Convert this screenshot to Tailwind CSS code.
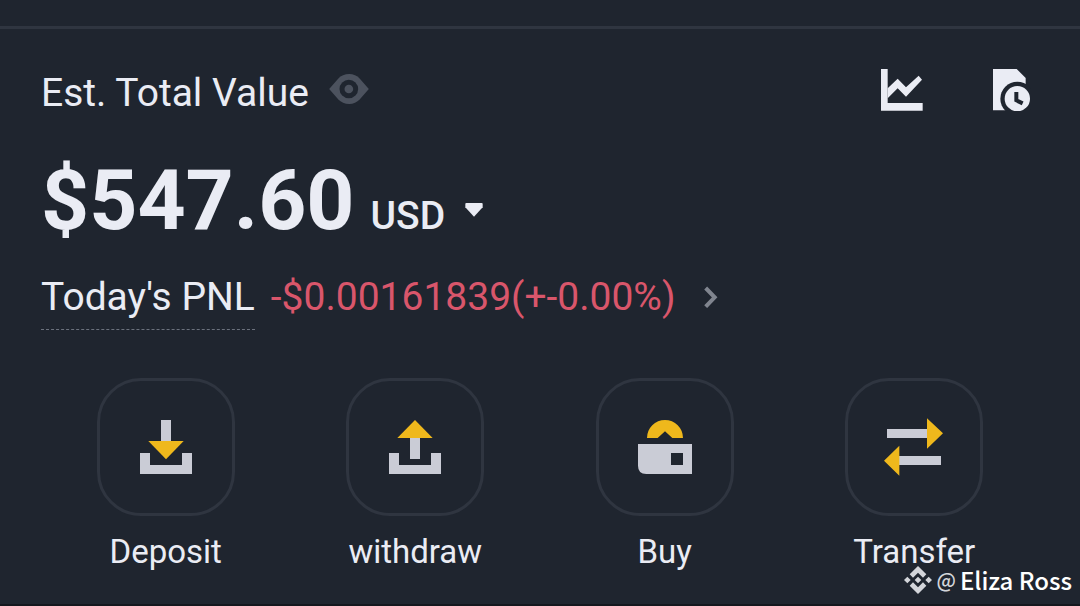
<!DOCTYPE html>
<html lang="en">
<head>
    <meta charset="UTF-8">
    <meta name="viewport" content="width=device-width, initial-scale=1.0">
    <script src="https://cdn.jsdelivr.net/npm/@tailwindcss/browser@4"></script>
    <title>Wallet Overview</title>
</head>
<body class="bg-[#1f252f] text-[#eaecf4] font-[Roboto,sans-serif]">
    <div class="relative min-h-screen border-b-2 border-[#14171e]">

        <!-- Top divider -->
        <div class="h-[26px]"></div>
        <hr class="border-t-[3px] border-[#2f3540]">

        <main class="pl-[41px] pr-[41px]">

            <!-- Title row -->
            <header class="flex items-center justify-between pt-9 pr-2">
                <div class="flex items-center gap-5">
                    <h1 class="text-[39px] leading-[56px]">Est. Total Value</h1>
                    <button type="button" aria-label="Hide balance" class="pb-2">
                        <svg class="w-10 h-[30px]" viewBox="0 0 119 90">
                            <path fill="#4c525e" d="M0 45L27 14Q40 0 60 0Q79 0 92 14L119 45L92 76Q79 90 60 90Q40 90 27 76Z"/>
                            <circle cx="59" cy="45" r="28" fill="#1f252f"/>
                            <circle cx="59" cy="45" r="13" fill="#4c525e"/>
                        </svg>
                    </button>
                </div>
                <div class="flex items-center gap-[70px] pb-1.5">
                    <button type="button" aria-label="Analysis">
                        <svg class="w-[42px] h-[42px]" viewBox="0 0 126 126" fill="#eaecf4">
                            <path d="M0 0H20V102H125V125H0Z"/>
                            <path d="M20 58L50 29L75 55L113 20L123 32L75 83L50 58L20 88Z"/>
                        </svg>
                    </button>
                    <button type="button" aria-label="History">
                        <svg class="w-[38px] h-[42px]" viewBox="0 0 114 126">
                            <path fill="#eaecf4" d="M0 0H71L98 27V124H0Z"/>
                            <circle cx="73" cy="89" r="51" fill="#1f252f"/>
                            <circle cx="73" cy="89" r="38" fill="#eaecf4"/>
                            <path d="M70 69V94L89 103" fill="none" stroke="#1f252f" stroke-width="12"/>
                        </svg>
                    </button>
                </div>
            </header>

            <!-- Balance -->
            <div class="flex items-baseline gap-4 mt-7">
                <p class="text-[84px] leading-[104px] font-bold">$547.60</p>
                <button type="button" class="flex items-center gap-5 text-[39px] leading-[48px] font-medium">
                    USD
                    <svg class="w-[18px] h-[14px] mb-3" viewBox="0 0 54 42" fill="#eaecf4">
                        <path d="M4 0H50Q53 0 53 3V13L27 41L1 13V3Q1 0 4 0Z"/>
                    </svg>
                </button>
            </div>

            <!-- Daily profit and loss -->
            <div class="flex items-start gap-4 mt-4 text-[39px] leading-[56px]">
                <p class="border-b border-dashed border-[#6b717d] pb-1">Today's PNL</p>
                <a href="#" class="flex items-center gap-7">
                    <span class="text-[#d9566b]">-$0.00161839(+-0.00%)</span>
                    <svg class="w-[14px] h-[22px]" viewBox="0 0 42 66" fill="none" stroke="#80858f" stroke-width="12">
                        <path d="M5 6L32 34L5 62"/>
                    </svg>
                </a>
            </div>

            <!-- Actions -->
            <nav class="grid grid-cols-4 mt-12 text-[33px] leading-[40px]">
                <a href="#" class="flex flex-col items-center gap-4">
                    <span class="flex items-center justify-center w-[138px] h-[138px] rounded-[44px] border-3 border-[#2f3540]">
                        <svg class="w-[60px] h-[60px]" viewBox="0 0 180 180">
                            <path fill="#caccd6" d="M75 9H105V72H75ZM12 108H42V144H138V108H168V171H12Z"/>
                            <path fill="#efb81c" d="M37 72H143L90 127Z"/>
                        </svg>
                    </span>
                    Deposit
                </a>
                <a href="#" class="flex flex-col items-center gap-4">
                    <span class="flex items-center justify-center w-[138px] h-[138px] rounded-[44px] border-3 border-[#2f3540]">
                        <svg class="w-[60px] h-[60px]" viewBox="0 0 180 180">
                            <path fill="#caccd6" d="M75 62H105V126H75ZM12 108H42V144H138V108H168V171H12Z"/>
                            <path fill="#efb81c" d="M37 63H143L90 9Z"/>
                        </svg>
                    </span>
                    withdraw
                </a>
                <a href="#" class="flex flex-col items-center gap-4">
                    <span class="flex items-center justify-center w-[138px] h-[138px] rounded-[44px] border-3 border-[#2f3540]">
                        <svg class="w-[60px] h-[60px]" viewBox="0 0 180 180">
                            <path fill="#efb81c" d="M36 63A54 54 0 0 1 144 63H112L90 43L68 63Z"/>
                            <path fill="#caccd6" fill-rule="evenodd" d="M9 81H171V171H34Q9 171 9 146ZM108 108V144H144V108Z"/>
                        </svg>
                    </span>
                    Buy
                </a>
                <a href="#" class="flex flex-col items-center gap-4">
                    <span class="flex items-center justify-center w-[138px] h-[138px] rounded-[44px] border-3 border-[#2f3540]">
                        <svg class="w-[60px] h-[60px]" viewBox="0 0 180 180">
                            <path fill="#caccd6" d="M9 36H131V63H9ZM44 117H171V144H44Z"/>
                            <path fill="#efb81c" d="M129 4L177 49L129 95ZM46 86V176L0 131Z"/>
                        </svg>
                    </span>
                    Transfer
                </a>
            </nav>
        </main>

        <!-- Author watermark -->
        <div class="absolute right-2 bottom-1.5 flex items-center gap-1 text-2xl leading-[36px] font-medium font-['Noto_Sans_CJK_SC',sans-serif] text-white">
            <svg class="w-7 h-7" viewBox="0 0 84 84" fill="#d3d5da">
                <path d="M42 0L67 25L57 35L42 20L27 35L17 25ZM42 84L67 59L57 49L42 64L27 49L17 59Z"/>
                <path d="M42 32L52 42L42 52L32 42ZM10 32L20 42L10 52L0 42ZM74 32L84 42L74 52L64 42Z"/>
            </svg>
            <span class="text-xl text-[#d3d5da]">@</span>
            <span>Eliza Ross</span>
        </div>
    </div>
</body>
</html>
